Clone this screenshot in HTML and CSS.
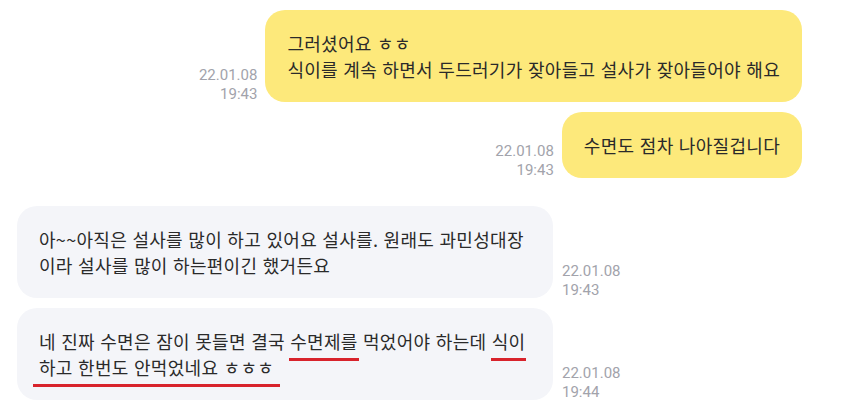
FILE: index.html
```html
<!DOCTYPE html>
<html lang="ko">
<head>
<meta charset="utf-8">
<link rel="stylesheet" href="styles.css">
</head>
<body>
<div class="chat">
  <div class="row out">
    <div class="time">22.01.08<br>19:43</div>
    <div class="bubble mine">그러셨어요 ㅎㅎ<br>식이를 계속 하면서 두드러기가 잦아들고 설사가 잦아들어야 해요</div>
  </div>
  <div class="row out">
    <div class="time">22.01.08<br>19:43</div>
    <div class="bubble mine">수면도 점차 나아질겁니다</div>
  </div>
  <div class="row in group">
    <div class="bubble theirs">아~~아직은 설사를 많이 하고 있어요 설사를. 원래도 과민성대장<br>이라 설사를 많이 하는편이긴 했거든요</div>
    <div class="time">22.01.08<br>19:43</div>
  </div>
  <div class="row in">
    <div class="bubble theirs">네 진짜 수면은 잠이 못들면 결국 <span class="mark">수면제를</span> 먹었어야 하는데 <span class="mark">식이</span><br><span class="mark wide">하고 한번도 안먹었네요 ㅎㅎㅎ</span></div>
    <div class="time">22.01.08<br>19:44</div>
  </div>
</div>
</body>
</html>
```

FILE: styles.css
```css
html, body {
  margin: 0;
  padding: 0;
  background: #ffffff;
}

.chat {
  display: flex;
  flex-direction: column;
  gap: 10px;
  padding: 10px 39px 0 17px;
}

.row {
  display: flex;
  align-items: flex-end;
  gap: 8px;
}

.row.out {
  justify-content: flex-end;
}

.row.in {
  justify-content: flex-start;
  gap: 9px;
}

.row.group {
  margin-top: 18px;
}

.bubble {
  box-sizing: border-box;
  padding: 20px 22px;
  border-radius: 20px;
  font-family: "Noto Sans CJK KR", "Noto Sans", sans-serif;
  font-size: 18px;
  letter-spacing: 0.3px;
  line-height: 26px;
  color: #2a2a2a;
  white-space: nowrap;
}

.mine {
  background: #fde97b;
}

.theirs {
  background: #f4f5f9;
  width: 536px;
}

.time {
  font-family: Roboto, "Liberation Sans", sans-serif;
  font-size: 15px;
  line-height: 19px;
  color: #a2a3ab;
  margin-bottom: -2px;
}

.row.out .time {
  text-align: right;
}

.mark {
  border-bottom: 3px solid #d8232c;
  padding: 0 1px 4px;
  margin: 0 -1px;
}

.mark.wide {
  padding: 0 6px 4px;
  margin: 0 -6px;
}
```
